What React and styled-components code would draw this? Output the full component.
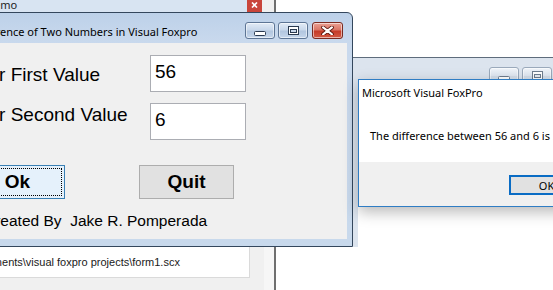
import React from 'react';
import styled, { createGlobalStyle } from 'styled-components';

const GlobalStyle = createGlobalStyle`
  html, body {
    margin: 0;
    padding: 0;
    background: #ffffff;
  }
  body {
    font-family: "Liberation Sans", Arial, sans-serif;
  }
`;

const Desktop = styled.div`
  position: relative;
  width: 553px;
  height: 290px;
  overflow: hidden;
  background: #ffffff;
`;

/* project manager window, mostly hidden behind the form */
const ProjectWindow = styled.div`
  position: absolute;
  left: -100px;
  top: -18px;
  width: 376px;
  height: 308px;
  box-sizing: border-box;
  display: flex;
  flex-direction: column;
  background: #f0f0f0;
  border-right: 2px solid #6f6f6f;
`;

const ProjectTitle = styled.div`
  height: 30px;
  display: flex;
  align-items: flex-start;
  background: #d8e4f2;
  margin-right: 12px;
`;

const ProjectCaption = styled.span`
  margin: 15px 0 0 86px;
  font-family: "Noto Sans", sans-serif;
  font-size: 11px;
  line-height: 15px;
  color: #1e1e1e;
`;

const SmallClose = styled.div`
  margin: 0 0 0 auto;
  width: 15px;
  height: 30px;
  display: flex;
  align-items: flex-end;
  justify-content: center;
  padding-bottom: 4px;
  box-sizing: border-box;
  background: #c9453a;
`;

const ProjectBody = styled.div`
  flex: 1;
  display: flex;
  flex-direction: column;
  justify-content: flex-end;
  padding: 0 24px 12px 0;
  box-shadow: inset -10px 0 0 #f6f6f6;
`;

const PathBox = styled.div`
  height: 31px;
  display: flex;
  align-items: center;
  padding-left: 69px;
  background: #ffffff;
  border-right: 1px solid #dadada;
  border-bottom: 1px solid #dadada;
  font-size: 11px;
  color: #1a1a1a;
  white-space: nowrap;
`;

/* window at the right, behind the message box */
const SideWindow = styled.div`
  position: absolute;
  left: 353px;
  top: 57px;
  width: 200px;
  height: 190px;
  box-sizing: border-box;
  border-top: 1px solid #5e6c7c;
  background: #dce4ee;
  padding-left: 5px;
  display: flex;
  flex-direction: column;
`;

const SideTitle = styled.div`
  height: 24px;
  display: flex;
  justify-content: flex-end;
  align-items: flex-start;
  padding: 9px 1px 0 0;
  box-sizing: border-box;
  gap: 3px;
`;

const SideClient = styled.div`
  flex: 1;
  background: #ffffff;
`;

/* the VFP form */
const Form = styled.div`
  position: absolute;
  left: -48px;
  top: 12px;
  width: 401px;
  height: 235px;
  box-sizing: border-box;
  border: 1px solid #34475d;
  border-radius: 6px 6px 0 0;
  background: linear-gradient(#bdd1e9, #c9d9ed 30px, #c8d9ec);
  padding: 0 5px 7px 7px;
  display: flex;
  flex-direction: column;
`;

const TitleBar = styled.div`
  height: 30px;
  display: flex;
  align-items: flex-start;
  padding: 0 4px 0 11px;
`;

const Caption = styled.span`
  margin-top: 11px;
  font-family: "Noto Sans", sans-serif;
  font-size: 11px;
  line-height: 15px;
  color: #000000;
  white-space: nowrap;
`;

const CaptionButtons = styled.div`
  margin: 9px 0 0 auto;
  display: flex;
  gap: 3px;
`;

const CaptionButton = styled.div`
  width: ${p => (p.$close ? 31 : 30)}px;
  height: 17px;
  margin-left: ${p => (p.$close ? 1 : 0)}px;
  box-sizing: border-box;
  display: flex;
  align-items: center;
  justify-content: center;
  border: 1px solid ${p => (p.$close ? '#7a2b22' : p.$dim ? '#9aa9bb' : '#5d7595')};
  border-radius: 3px;
  background: ${p =>
    p.$close
      ? 'linear-gradient(#eba194, #da7666 45%, #c63b28 55%, #d35a45)'
      : p.$dim
      ? 'linear-gradient(#f0f4f9, #dfe7f1 50%, #d3dde9 55%, #dde6f0)'
      : 'linear-gradient(#e2ebf6, #c9d8eb 45%, #b2c6df 55%, #c5d6eb)'};
  box-shadow: inset 0 0 0 1px rgba(255, 255, 255, 0.55);
`;

const Client = styled.div`
  flex: 1;
  background: #f0f0f0;
  padding-top: 12px;
  display: flex;
  flex-direction: column;
`;

const FieldRow = styled.div`
  display: grid;
  grid-template-columns: 190px 96px;
  margin-bottom: 11px;
`;

const FieldLabel = styled.div`
  padding-top: ${p => p.$offset}px;
  font-size: 19px;
  line-height: 22px;
  color: #000000;
  white-space: nowrap;
`;

const TextBox = styled.div`
  height: 37px;
  box-sizing: border-box;
  padding: 5px 4px;
  background: #ffffff;
  border: 1px solid #abadb3;
  font-size: 19px;
  line-height: 22px;
  color: #000000;
`;

const ButtonRow = styled.div`
  display: flex;
  gap: 74px;
  padding-left: 10px;
  margin-top: 14px;
`;

const PushButton = styled.div`
  position: relative;
  width: 95px;
  height: 34px;
  box-sizing: border-box;
  display: flex;
  align-items: center;
  justify-content: center;
  background: ${p => (p.$focused ? '#e5f1fb' : '#e1e1e1')};
  border: 1px solid ${p => (p.$focused ? '#3a80b4' : '#adadad')};
  font-size: 19px;
  font-weight: bold;
  color: #000000;

  &::after {
    content: '';
    display: ${p => (p.$focused ? 'block' : 'none')};
    position: absolute;
    inset: 2px;
    border: 1px dotted #000000;
  }
`;

const Credit = styled.div`
  margin-top: 13px;
  padding-left: 24px;
  font-size: 15.5px;
  line-height: 18px;
  color: #000000;
  white-space: nowrap;
`;

/* message box */
const MessageBox = styled.div`
  position: absolute;
  left: 358px;
  top: 79px;
  width: 238px;
  height: 128px;
  box-sizing: border-box;
  border: 1px solid #2f7dc4;
  background: #ffffff;
  display: flex;
  flex-direction: column;
  box-shadow: 0 5px 14px rgba(0, 0, 0, 0.28);
  font-family: "Noto Sans", sans-serif;
  font-size: 11px;
  line-height: 15px;
  color: #000000;
`;

const BoxTitle = styled.div`
  padding: 5px 0 0 3px;
`;

const BoxText = styled.div`
  flex: 1;
  padding: 28px 0 0 11px;
  white-space: nowrap;
`;

const BoxButtons = styled.div`
  height: 44px;
  box-sizing: border-box;
  display: flex;
  justify-content: flex-end;
  padding: 13px 11px 0 0;
  background: #f0f0f0;
`;

const OkButton = styled.div`
  width: 75px;
  height: 20px;
  box-sizing: border-box;
  display: flex;
  align-items: center;
  justify-content: center;
  border: 2px solid #0a6cc4;
  background: #e1e1e1;
`;

const MinGlyph = ({ dim }) => (
  <svg width="12" height="6" viewBox="0 0 12 6" style={{ marginTop: 7 }}>
    <rect x="0.5" y="0.5" width="11" height="4" rx="1" fill="#ffffff" stroke={dim ? '#6f7d8e' : '#2a3a50'} />
  </svg>
);

const MaxGlyph = ({ dim }) => (
  <svg width="11" height="9" viewBox="0 0 11 9">
    <rect x="0.5" y="0.5" width="10" height="8" fill="#ffffff" stroke={dim ? '#6f7d8e' : '#2a3a50'} />
    <rect x="2.5" y="3.5" width="6" height="3" fill={dim ? '#e6ecf3' : '#c8d7ea'} stroke={dim ? '#6f7d8e' : '#2a3a50'} />
  </svg>
);

const CloseGlyph = ({ size = 13 }) => (
  <svg width={size} height={size * 0.75} viewBox="0 0 13 10">
    <path d="M2 1.5 L11 8.5 M11 1.5 L2 8.5" stroke="#5a1810" strokeWidth="4" strokeLinecap="round" />
    <path d="M2 1.5 L11 8.5 M11 1.5 L2 8.5" stroke="#ffffff" strokeWidth="2.2" strokeLinecap="round" />
  </svg>
);

export default function App() {
  return (
    <>
      <GlobalStyle />
      <Desktop>
        <ProjectWindow>
          <ProjectTitle>
            <ProjectCaption>Demo</ProjectCaption>
            <SmallClose>
              <svg width="7" height="6" viewBox="0 0 7 6">
                <path d="M1 0.5 L6 5.5 M6 0.5 L1 5.5" stroke="#ffffff" strokeWidth="1.6" />
              </svg>
            </SmallClose>
          </ProjectTitle>
          <ProjectBody>
            <PathBox>documents\visual foxpro projects\form1.scx</PathBox>
          </ProjectBody>
        </ProjectWindow>

        <SideWindow>
          <SideTitle>
            <CaptionButton $dim>
              <MinGlyph dim />
            </CaptionButton>
            <CaptionButton $dim>
              <MaxGlyph dim />
            </CaptionButton>
          </SideTitle>
          <SideClient />
        </SideWindow>

        <Form>
          <TitleBar>
            <Caption>Difference of Two Numbers in Visual Foxpro</Caption>
            <CaptionButtons>
              <CaptionButton>
                <MinGlyph />
              </CaptionButton>
              <CaptionButton>
                <MaxGlyph />
              </CaptionButton>
              <CaptionButton $close>
                <CloseGlyph />
              </CaptionButton>
            </CaptionButtons>
          </TitleBar>
          <Client>
            <FieldRow>
              <FieldLabel $offset={9}>Enter First Value</FieldLabel>
              <TextBox>56</TextBox>
            </FieldRow>
            <FieldRow>
              <FieldLabel $offset={1}>Enter Second Value</FieldLabel>
              <TextBox>6</TextBox>
            </FieldRow>
            <ButtonRow>
              <PushButton $focused>Ok</PushButton>
              <PushButton>Quit</PushButton>
            </ButtonRow>
            <Credit>Created By&nbsp; Jake R. Pomperada</Credit>
          </Client>
        </Form>

        <MessageBox>
          <BoxTitle>Microsoft Visual FoxPro</BoxTitle>
          <BoxText>The difference between 56 and 6 is 50</BoxText>
          <BoxButtons>
            <OkButton>OK</OkButton>
          </BoxButtons>
        </MessageBox>
      </Desktop>
    </>
  );
}
